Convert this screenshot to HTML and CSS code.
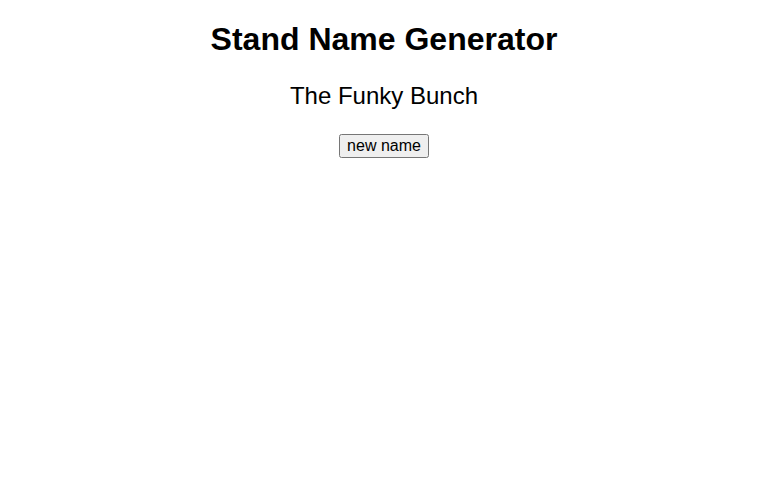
FILE: index.html
```html
<!DOCTYPE html>
<html lang="en">
  <head>
    <meta charset="UTF-8" />
    <title>Stand Name Generator</title>
    <link rel="stylesheet" href="styles.css">
  </head>
  <body>
    <div class="app">
      <h1>Stand Name Generator</h1>
      <p id="name" class="name">The Funky Bunch</p>
      <button id="generate" class="generate">new name</button>
    </div>

    <script>
      const first = ["The Funky", "Golden", "Crazy", "Silver", "Killer", "Purple"];
      const second = ["Bunch", "Queen", "Diamond", "Experience", "Wind", "Haze"];

      document.getElementById("generate").onclick = function () {
        let a = first[Math.floor(Math.random() * first.length)];
        let b = second[Math.floor(Math.random() * second.length)];
        document.getElementById("name").textContent = a + " " + b;
      };
    </script>
  </body>
</html>
```

FILE: styles.css
```css
body {
  margin: 0;
  font-family: "Liberation Sans", Arial, sans-serif;
  color: #000;
  background: #fff;
}
.app {
  text-align: center;
  padding: 0 8px;
}
h1 {
  font-size: 32px;
  margin: 21px 0;
}
.name {
  font-size: 24px;
  margin: 24px 0;
}
.generate {
  font-family: "Liberation Sans", Arial, sans-serif;
  font-size: 16px;
}
```
